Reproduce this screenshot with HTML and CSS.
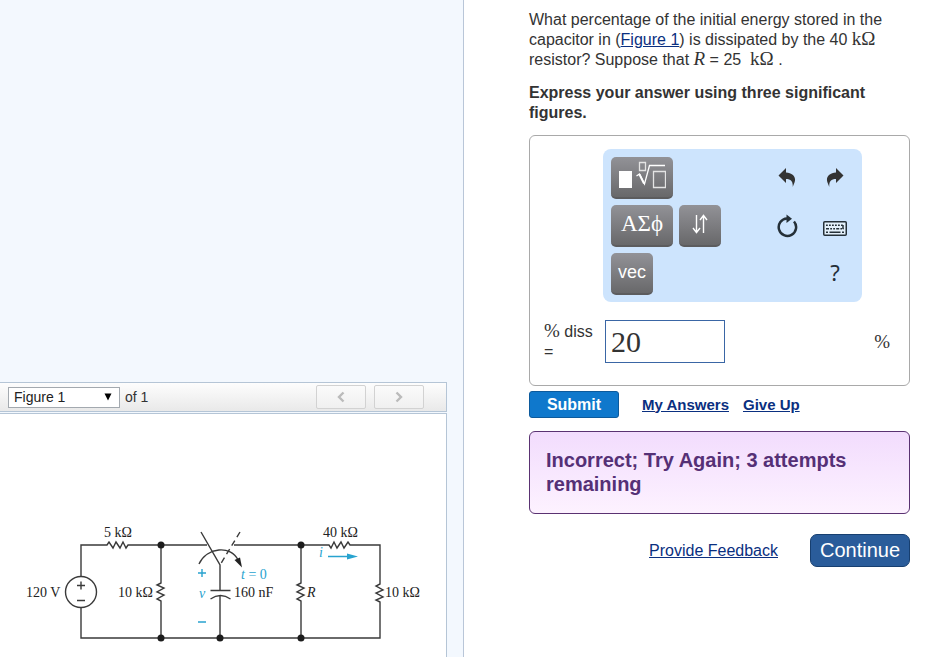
FILE: index.html
```html
<!DOCTYPE html>
<html lang="en">
<head>
    <meta charset="UTF-8">
    <meta name="viewport" content="width=device-width, initial-scale=1.0">
    <title>Problem</title>
    <link rel="stylesheet" href="styles.css">
</head>
<body>
    <div class="page">
        <div class="left">
            <div class="fig-bar">
                <span class="fig-select">
                    <select id="figure" aria-label="Figure">
                        <option>Figure 1</option>
                    </select>
                    <svg class="caret" width="8" height="8" viewBox="0 0 8 8"><path d="M0.5 0.5h7L4 7.5z" fill="#000"/></svg>
                </span>
                <label for="figure">of 1</label>
                <div class="fig-nav">
                    <button type="button" aria-label="Previous"><svg width="10" height="12" viewBox="0 0 10 12"><path d="M7.5 1.5L3 6l4.5 4.5" fill="none" stroke="#bbb" stroke-width="2.4"/></svg></button>
                    <button type="button" aria-label="Next"><svg width="10" height="12" viewBox="0 0 10 12"><path d="M2.5 1.5L7 6l-4.5 4.5" fill="none" stroke="#bbb" stroke-width="2.4"/></svg></button>
                </div>
            </div>
            <div class="fig-body">
                <svg class="circuit" width="446" height="243" viewBox="0 414 446 243">
                    <!-- wires -->
                    <g fill="none" stroke="#3a3a3a" stroke-width="1.4">
                        <path d="M81 576V545H107l2-3 4 6 3-6 4 6 3-6 3 6 2-3H207"/>
                        <path d="M81 608V638H380V602l-4-2 7-3-7-4 7-3-7-4 4-2V545H350l-2-3-4 6-3-6-4 6-3-6-3 6-2-3H234"/>
                        <path d="M161 545V583l-4 2 7 3-7 4 7 3-7 4 4 2V638"/>
                        <path d="M301 545V583l-4 2 7 3-7 4 7 3-7 4 4 2V638"/>
                        <circle cx="81" cy="592" r="15.5"/>
                        <path d="M77 585.5h8M81 581.5v8M77 600.5h8"/>
                        <!-- switch -->
                        <path d="M201 532L220 565V590M220 595V638"/>
                        <path d="M240 532L220 565" stroke-dasharray="6 4"/>
                        <path d="M199 564C207 547 231 545 238 560"/>
                        <!-- capacitor -->
                        <path d="M210.5 590.5h20M210.5 599q10-7 20 0"/>
                    </g>
                    <path d="M234.5 560l5.500-2.500 2 10z" fill="#222"/>
                    <g fill="#1c1c1c">
                        <circle cx="161" cy="545" r="3.5"/>
                        <circle cx="301" cy="545" r="3.5"/>
                        <circle cx="161" cy="638" r="3.5"/>
                        <circle cx="220" cy="638" r="3.5"/>
                        <circle cx="301" cy="638" r="3.5"/>
                    </g>
                    <g stroke="#28a3cf" stroke-width="1.4" fill="none">
                        <path d="M198 573h8M202 569v8M198 622h8M328 556.5h20"/>
                    </g>
                    <path d="M347 553.5l11 3-11 3z" fill="#28a3cf"/>
                    <g class="lbl">
                        <text x="104" y="537">5 kΩ</text>
                        <text x="323" y="537">40 kΩ</text>
                        <text x="26" y="597">120 V</text>
                        <text x="118" y="597">10 kΩ</text>
                        <text x="234" y="597">160 nF</text>
                        <text x="307" y="597" class="it">R</text>
                        <text x="385" y="597">10 kΩ</text>
                        <text x="241" y="579" class="blue"><tspan class="it">t</tspan> = 0</text>
                        <text x="199" y="598" class="blue it">v</text>
                        <text x="319" y="557" class="blue it">i</text>
                    </g>
                </svg>
            </div>
        </div>

        <div class="right">
            <p class="question">What percentage of the initial energy stored in the capacitor in (<a href="#">Figure 1</a>) is dissipated by the 40 <span class="math">kΩ</span> resistor? Suppose that <i class="math">R</i> = 25 &nbsp;<span class="math">kΩ</span> .</p>
            <p class="hint">Express your answer using three significant figures.</p>

            <form class="answer">
                <div class="tools">
                    <div class="keys">
                        <div class="row">
                            <button type="button" class="key wide" aria-label="Templates">
                                <svg width="48" height="32" viewBox="0 0 48 32">
                                    <path d="M1 11h13v17H1z" fill="#fff"/>
                                    <g fill="none" stroke="#e4e4e4" stroke-width="1.3">
                                        <path d="M21.5 2.5h6v8h-6z"/>
                                        <path d="M35.5 11.5h12v16h-12z"/>
                                        <path d="M18.5 16l3-2 5 10 5-18.5H47" stroke="#fff"/>
                                        <path d="M21.5 14.5l4.5 9" stroke="#fff" stroke-width="2"/>
                                    </g>
                                </svg>
                            </button>
                        </div>
                        <div class="row">
                            <button type="button" class="key wide greek">ΑΣϕ</button>
                            <button type="button" class="key" aria-label="Arrows">
                                <svg width="16" height="22" viewBox="0 0 16 22"><path d="M4.5 2v17M1 15l3.5 4.5L8 15M11.5 20V2.500M8 7l3.5-4.500L15 7" fill="none" stroke="#fff" stroke-width="1.4"/></svg>
                            </button>
                        </div>
                        <div class="row">
                            <button type="button" class="key">vec</button>
                        </div>
                    </div>
                    <div class="icons">
                        <button type="button" aria-label="Undo"><svg width="18" height="20" viewBox="0 0 18 20"><path d="M0.5 7.5L8 0v4.5c7 .3 10.500 5 8.500 10l-1.800 4.500c.4-5-1.200-8-6.700-8v4z" fill="#333"/></svg></button>
                        <button type="button" aria-label="Redo"><svg width="18" height="20" viewBox="0 0 18 20"><path d="M17.5 7.5L10 0v4.5c-7 .3-10.500 5-8.500 10l1.800 4.500c-.4-5 1.200-8 6.700-8v4z" fill="#333"/></svg></button>
                        <button type="button" aria-label="Reset"><svg width="22" height="24" viewBox="0 0 22 24"><path d="M18 7.500A8.700 8.700 0 1 1 11 4.500" fill="none" stroke="#253038" stroke-width="2.500"/><path d="M10.500 0.500l5.500 4.200-5.500 4.300z" fill="#253038"/></svg></button>
                        <button type="button" aria-label="Keyboard"><svg class="kbd" width="24" height="15" viewBox="0 0 24 15">
                            <rect x="0.75" y="0.75" width="22.5" height="13.5" rx="1" fill="#e4f0fa" stroke="#253038" stroke-width="1.5"/>
                            <path d="M3 4.200h18" stroke="#253038" stroke-width="1.5" stroke-dasharray="1.800 1.200"/>
                            <path d="M3 7.700h18" stroke="#253038" stroke-width="1.5" stroke-dasharray="3 1.200 1.800 1.200 1.800 1.200"/>
                            <path d="M3 11.200h2M6.500 11.200h11M19 11.200h2M20 4v4" stroke="#253038" stroke-width="1.5"/>
                        </svg></button>
                        <button type="button" class="help">?</button>
                    </div>
                </div>
                <div class="entry">
                    <label for="ans"><span class="math">%</span> diss<br>=</label>
                    <input type="text" id="ans" value="20">
                    <span class="unit math">%</span>
                </div>
            </form>

            <div class="actions">
                <button type="button" class="submit">Submit</button>
                <a href="#">My Answers</a>
                <a href="#">Give Up</a>
            </div>

            <div class="message">Incorrect; Try Again; 3 attempts remaining</div>

            <div class="foot">
                <a href="#">Provide Feedback</a>
                <button type="button" class="continue">Continue</button>
            </div>
        </div>
    </div>
</body>
</html>
```
FILE: styles.css
```css
*{
    box-sizing: border-box;
    padding: 0;
    margin: 0;
}
body{
    font-family: "Liberation Sans", Arial, sans-serif;
    font-size: 16px;
    line-height: 20px;
    color: #333;
    background-color: #fff;
}
button,input,select{
    font-family: inherit;
}
a{
    color: #0a2f80;
}
svg{
    display: block;
}
.page{
    display: flex;
    min-height: 100vh;
}

/* figure pane */
.left{
    width: 50%;
    display: flex;
    flex-direction: column;
    justify-content: flex-end;
    padding-right: 16px;
    background-color: #f3f8fe;
    border-right: 1px solid #b9c6d8;
}
.fig-bar{
    display: flex;
    align-items: center;
    gap: 5px;
    height: 30px;
    padding: 0 22px 0 8px;
    border: 1px solid #b5c5d6;
    border-left: 0;
    background: linear-gradient(#fdfdfd, #e9e9e9);
    font-size: 14px;
}
.fig-select{
    position: relative;
}
.fig-select select{
    display: block;
    appearance: none;
    width: 112px;
    height: 21px;
    padding-left: 5px;
    border: 1px solid #a3a9af;
    background-color: #fff;
    font-size: 14px;
    color: #222;
}
.caret{
    position: absolute;
    top: 6px;
    right: 8px;
}
.fig-nav{
    display: flex;
    gap: 8px;
    margin-left: auto;
}
.fig-nav button{
    display: flex;
    align-items: center;
    justify-content: center;
    width: 50px;
    height: 24px;
    border: 1px solid #d2d2d2;
    border-radius: 2px;
    background: linear-gradient(#fbfbfb, #f0f0f0);
}
.fig-body{
    margin-top: 1px;
    border: 1px solid #b5c5d6;
    border-left: 0;
    border-bottom: 0;
    background-color: #fff;
}
.circuit{
    max-width: 100%;
}
.lbl{
    font-family: "Liberation Serif", serif;
    font-size: 14px;
    fill: #222;
    stroke: none;
}
.lbl .it{
    font-style: italic;
}
.lbl .blue{
    fill: #28a3cf;
}

/* question pane */
.right{
    width: 50%;
    padding: 10px 18px 0 65px;
}
.math{
    font-family: "Liberation Serif", serif;
    font-size: 19px;
    line-height: 16px;
}
.hint{
    margin-top: 13px;
    font-weight: bold;
}
.answer{
    margin-top: 12px;
    padding: 13px 14px 22px;
    border: 1px solid #a9a9a9;
    border-radius: 6px;
}
.tools{
    display: flex;
    justify-content: space-between;
    width: 259px;
    margin-left: 59px;
    padding: 8px 6px 7px 8px;
    border-radius: 8px;
    background-color: #cde4fd;
}
.keys{
    display: flex;
    flex-direction: column;
    gap: 6px;
}
.row{
    display: flex;
    gap: 6px;
}
.key{
    display: flex;
    align-items: center;
    justify-content: center;
    width: 42px;
    height: 42px;
    padding-bottom: 2px;
    border: 0;
    border-bottom: 2px solid #5c5c5e;
    border-radius: 5px;
    background: linear-gradient(#929297, #68686a);
    font-size: 18px;
    color: #fff;
}
.key.wide{
    width: 62px;
}
.key.greek{
    font-family: "Liberation Serif", serif;
    font-size: 23px;
}
.icons{
    display: grid;
    grid-template-columns: 42px 42px;
    grid-auto-rows: 42px;
    gap: 6px;
}
.icons button{
    display: flex;
    align-items: center;
    justify-content: center;
    border: 0;
    background: none;
}
.icons .kbd{
    margin-top: 4px;
}
.icons .help{
    grid-column: 2;
    padding-bottom: 4px;
    font-family: "Noto Sans", sans-serif;
    font-size: 22px;
    color: #253038;
}
.entry{
    display: flex;
    margin-top: 18px;
    padding-right: 5px;
}
.entry label{
    width: 61px;
    padding-top: 2px;
}
.entry input{
    width: 120px;
    height: 43px;
    padding: 0 5px;
    border: 1px solid #3a66a5;
    font-family: "Liberation Serif", serif;
    font-size: 30px;
    color: #333;
}
.unit{
    margin-left: auto;
    align-self: center;
}
.actions{
    display: flex;
    align-items: center;
    gap: 14px;
    margin-top: 5px;
    font-size: 15px;
    font-weight: bold;
}
.submit{
    width: 90px;
    height: 27px;
    margin-right: 9px;
    border: 1px solid #0c5a9c;
    border-radius: 3px;
    background-color: #0f78cc;
    font-size: 16px;
    font-weight: bold;
    color: #fff;
}
.message{
    margin-top: 13px;
    padding: 16px 16px 17px;
    border: 1px solid #5a3272;
    border-radius: 6px;
    background: linear-gradient(#f2dcfd, #fdf2ff);
    font-size: 20px;
    font-weight: bold;
    line-height: 24px;
    color: #553076;
}
.foot{
    display: flex;
    align-items: center;
    justify-content: flex-end;
    gap: 32px;
    margin-top: 20px;
}
.continue{
    width: 100px;
    height: 33px;
    border: 1px solid #173f70;
    border-radius: 7px;
    background-color: #2a5c9a;
    font-size: 20px;
    color: #fff;
}
```
